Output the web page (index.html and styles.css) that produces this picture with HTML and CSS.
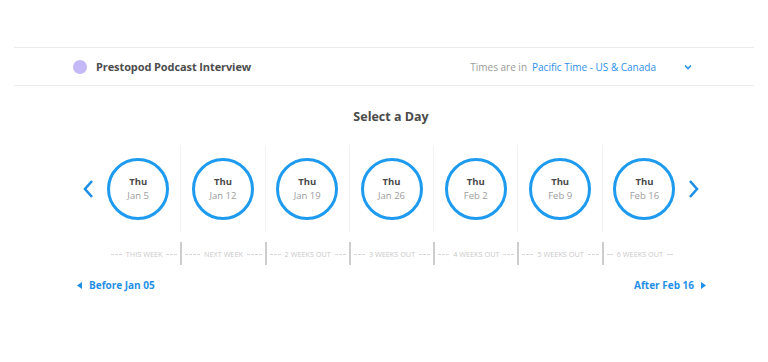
FILE: index.html
```html
<!DOCTYPE html>
<html>
<head>
<meta charset="utf-8">
<link rel="stylesheet" href="styles.css">
</head>
<body>
<div class="page">
  <div class="header">
    <div class="event">
      <span class="dot"></span>
      <span class="event-name">Prestopod Podcast Interview</span>
    </div>
    <div class="tz">
      <span class="tz-label">Times are in</span>
      <span class="tz-value">Pacific Time - US &amp; Canada</span>
      <svg class="tz-chev" width="8" height="6" viewBox="0 0 8 6"><path d="M1 1.5 L4 4.5 L7 1.5" fill="none" stroke="#2d8fe8" stroke-width="1.6"/></svg>
    </div>
  </div>

  <h2 class="title">Select a Day</h2>

  <div class="picker">
    <div class="arrow">
      <svg width="12" height="20" viewBox="0 0 12 20"><path d="M10 2 L3 10 L10 18" fill="none" stroke="#1f8fe6" stroke-width="2.6"/></svg>
    </div>
    <div class="days">
      <div class="day"><div class="circle"><b>Thu</b><span>Jan 5</span></div></div>
      <div class="day"><div class="circle"><b>Thu</b><span>Jan 12</span></div></div>
      <div class="day"><div class="circle"><b>Thu</b><span>Jan 19</span></div></div>
      <div class="day"><div class="circle"><b>Thu</b><span>Jan 26</span></div></div>
      <div class="day"><div class="circle"><b>Thu</b><span>Feb 2</span></div></div>
      <div class="day"><div class="circle"><b>Thu</b><span>Feb 9</span></div></div>
      <div class="day"><div class="circle"><b>Thu</b><span>Feb 16</span></div></div>
    </div>
    <div class="arrow">
      <svg width="12" height="20" viewBox="0 0 12 20"><path d="M2 2 L9 10 L2 18" fill="none" stroke="#1f8fe6" stroke-width="2.6"/></svg>
    </div>
  </div>

  <div class="weeks">
    <div class="week"><span>THIS WEEK</span></div>
    <div class="week"><span>NEXT WEEK</span></div>
    <div class="week"><span>2 WEEKS OUT</span></div>
    <div class="week"><span>3 WEEKS OUT</span></div>
    <div class="week"><span>4 WEEKS OUT</span></div>
    <div class="week"><span>5 WEEKS OUT</span></div>
    <div class="week"><span>6 WEEKS OUT</span></div>
  </div>

  <div class="nav">
    <a class="nav-link"><svg width="5" height="7" viewBox="0 0 5 7"><path d="M5 0 L0 3.5 L5 7 Z" fill="#1f8fe6"/></svg>Before Jan 05</a>
    <a class="nav-link">After Feb 16<svg width="5" height="7" viewBox="0 0 5 7"><path d="M0 0 L5 3.5 L0 7 Z" fill="#1f8fe6"/></svg></a>
  </div>
</div>
</body>
</html>
```

FILE: styles.css
```css
html, body {
  margin: 0;
  padding: 0;
  background: #fff;
}
body {
  font-family: "Open Sans", Lato, "Liberation Sans", sans-serif;
  color: #4a4a4a;
  width: 768px;
  height: 362px;
  overflow: hidden;
}
.page {
  padding: 47px 14px 0 14px;
}
.header {
  display: flex;
  align-items: center;
  justify-content: space-between;
  height: 37px;
  border-top: 1px solid #ebebeb;
  border-bottom: 1px solid #ebebeb;
  padding: 0 62px 0 59px;
}
.event {
  display: flex;
  align-items: center;
  gap: 9px;
}
.dot {
  width: 14px;
  height: 14px;
  border-radius: 50%;
  background: #c4b9f6;
}
.event-name {
  font-size: 11px;
  font-weight: 700;
  color: #4d4d4d;
  letter-spacing: -0.1px;
}
.tz {
  display: flex;
  align-items: center;
  font-size: 10px;
}
.tz-label {
  color: #9a9a9a;
  margin-right: 5px;
}
.tz-value {
  color: #2d8fe8;
}
.tz-chev {
  margin-left: 28px;
}
.title {
  margin: 0;
  padding: 22px 0 0 14px;
  height: 37px;
  box-sizing: border-box;
  text-align: center;
  font-size: 12.5px;
  font-weight: 700;
  color: #4a4a4a;
}
.picker {
  display: flex;
  align-items: center;
  margin-top: 22px;
  padding-left: 66px;
}
.arrow {
  width: 16px;
  display: flex;
  justify-content: center;
}
.days {
  display: grid;
  grid-template-columns: repeat(7, 84.3px);
}
.day {
  height: 87px;
  display: flex;
  align-items: center;
  justify-content: center;
  border-left: 1px solid #f2f2f2;
}
.day:first-child {
  border-left: none;
}
.circle {
  width: 56px;
  height: 56px;
  border: 3px solid #1e9bef;
  border-radius: 50%;
  display: flex;
  flex-direction: column;
  align-items: center;
  justify-content: center;
  gap: 1px;
  font-size: 9.5px;
  line-height: 13px;
}
.circle b {
  color: #4a4a4a;
  font-weight: 700;
}
.circle span {
  color: #9c9c9c;
}
.weeks {
  display: grid;
  grid-template-columns: repeat(7, 84.3px);
  margin-left: 82px;
  margin-top: 10px;
}
.week {
  height: 23px;
  display: flex;
  align-items: center;
  gap: 4px;
  padding: 0 3px 0 3px;
  font-size: 7.3px;
  color: #c9c9c9;
  white-space: nowrap;
  border-left: 2px solid #cdcdcd;
}
.week::before,
.week::after {
  content: "";
  flex: 1;
  border-top: 1px dashed #d8d8d8;
  margin-top: 1px;
}
.week:first-child {
  border-left-color: transparent;
}
.week:first-child::before {
  margin-left: 10px;
}
.week:last-child::after {
  margin-right: 10px;
}
.nav {
  display: flex;
  justify-content: space-between;
  padding: 13px 48px 0 63px;
}
.nav-link {
  display: flex;
  align-items: center;
  gap: 7px;
  font-size: 10px;
  font-weight: 700;
  color: #1f8fe6;
}
```
